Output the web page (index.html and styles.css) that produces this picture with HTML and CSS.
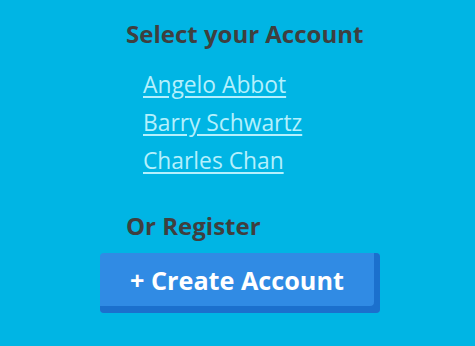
FILE: index.html
```html
<!DOCTYPE html>
<html>
<head>
<meta charset="utf-8">
<link rel="stylesheet" href="styles.css">
</head>
<body>
<main class="panel">
  <h2 class="title">Select your Account</h2>
  <ul class="accounts">
    <li><a href="#">Angelo Abbot</a></li>
    <li><a href="#">Barry Schwartz</a></li>
    <li><a href="#">Charles Chan</a></li>
  </ul>
  <h2 class="title register">Or Register</h2>
  <button class="create">+ Create Account</button>
</main>
</body>
</html>
```
FILE: styles.css
```css
html, body {
  margin: 0;
  padding: 0;
  background: #00b5e4;
  height: 100%;
}
body {
  font-family: "Open Sans", "Liberation Sans", sans-serif;
}
.panel {
  padding: 17px 0 0 100px;
  display: flex;
  flex-direction: column;
  align-items: flex-start;
}
.title {
  margin: 0 0 0 26px;
  font-size: 24px;
  font-weight: 700;
  color: #3f3f3f;
  line-height: 34px;
}
.accounts {
  list-style: none;
  margin: 19px 0 0 43px;
  padding: 0;
  display: flex;
  flex-direction: column;
  gap: 8px;
}
.accounts a {
  font-size: 22.8px;
  line-height: 30px;
  color: #b4f0fd;
  text-decoration: underline;
  text-underline-offset: 3px;
}
.register {
  margin-top: 33px;
}
.create {
  margin-top: 10px;
  width: 280px;
  height: 60px;
  border: 0;
  border-radius: 4px;
  background: #308be4;
  box-shadow: inset -6px -7px 0 #1b70cd;
  color: #fff;
  font-family: inherit;
  font-size: 25.2px;
  font-weight: 700;
  padding: 0 6px 7px 0;
}
```
